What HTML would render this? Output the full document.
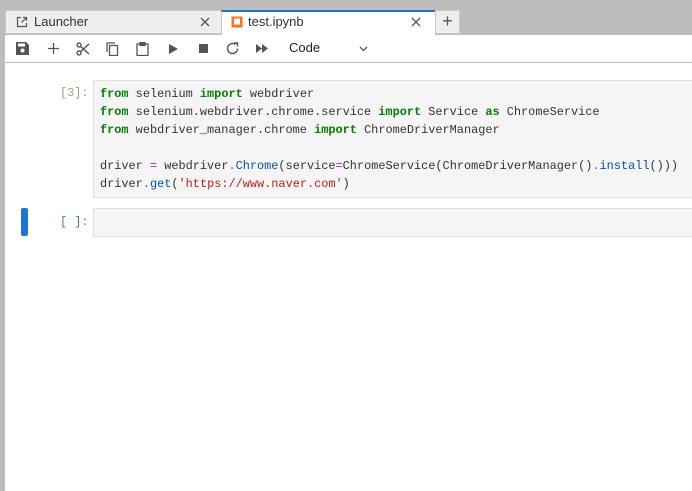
<!DOCTYPE html>
<html><head><style>
body{margin:0;width:692px;height:491px;background:#bdbdbd;overflow:hidden;font-family:"Liberation Sans",sans-serif;position:relative}
.main{position:absolute;left:5px;top:35px;width:687px;height:456px;background:#fff}
.tab{position:absolute;top:10px;height:24px;background:#eee;border:1px solid #c8c8c8;box-sizing:border-box;font-size:13px;color:#333;line-height:22px}
.tb{position:absolute;top:35px;left:5px;width:687px;height:27px;border-bottom:1px solid #c0c0c0;background:#fff}
.ic{position:absolute;top:7px}
.cell{position:absolute;left:93px;width:610px;background:#f5f5f5;border:1px solid #e0e0e0;box-sizing:border-box}
pre{margin:0;font-family:"Liberation Mono",monospace;font-size:11.9px;line-height:18px;color:#333;padding:4px 0 0 6px}
.k{color:#008000;font-weight:bold}.f{color:#0055aa}.s{color:#ba2121}.o{color:#aa22ff}
.pr{position:absolute;font-family:"Liberation Mono",monospace;font-size:11.9px}
.x{position:absolute;top:6px}
</style></head><body>
<div class="main"></div>
<div class="tab" style="left:5px;width:217px;padding-left:28px">Launcher
<svg style="position:absolute;left:10px;top:5px" width="12" height="12" viewBox="0 0 12 12" fill="none" stroke="#555" stroke-width="1.2"><path d="M5 1.5H1.5v9h9V7M7 1.5h3.5V5M10.5 1.5L5.5 6.5"/></svg>
<svg class="x" style="left:194px" width="10" height="10" viewBox="0 0 10 10" stroke="#555" stroke-width="1.3"><path d="M1 1l8 8M9 1L1 9"/></svg></div>
<div class="tab" style="left:221px;width:215px;background:#fff;border-top:2px solid #1976d2;border-bottom:none;padding-left:26px;line-height:20px;height:25px">test.ipynb
<svg style="position:absolute;left:9px;top:4px" width="12" height="12" viewBox="0 0 12 12"><rect x="0.5" y="0.5" width="11" height="11" fill="#f37726"/><rect x="3" y="2.5" width="6" height="6" fill="#fff"/></svg>
<svg class="x" style="left:189px;top:5px" width="10" height="10" viewBox="0 0 10 10" stroke="#555" stroke-width="1.3"><path d="M1 1l8 8M9 1L1 9"/></svg></div>
<div class="tab" style="left:435px;width:25px;text-align:center;font-size:18px;color:#555;line-height:21px">+</div>
<div class="tb">
<svg class="ic" style="left:11px" width="13" height="13" viewBox="0 0 13 13"><path d="M0 0h10l3 3v10H0z" fill="#555"/><rect x="2" y="1.5" width="7" height="3" fill="#fff"/><circle cx="6.5" cy="8.5" r="2" fill="#fff"/></svg>
<svg class="ic" style="left:42px" width="13" height="13" viewBox="0 0 13 13" stroke="#555" stroke-width="1.3"><path d="M6.5 1v11M1 6.5h11"/></svg>
<svg class="ic" style="left:71px" width="14" height="14" viewBox="0 0 14 14" fill="none" stroke="#555" stroke-width="1.4"><circle cx="3" cy="3" r="2"/><circle cx="3" cy="11" r="2"/><path d="M4.5 4.3L13 12M4.5 9.7L13 2"/></svg>
<svg class="ic" style="left:101px" width="13" height="14" viewBox="0 0 13 14" fill="none" stroke="#555" stroke-width="1.3"><path d="M1 10V1h8"/><rect x="3.5" y="3.5" width="8" height="10"/></svg>
<svg class="ic" style="left:131px" width="13" height="14" viewBox="0 0 13 14" fill="none" stroke="#555" stroke-width="1.3"><rect x="1" y="2" width="11" height="11.5"/><rect x="4" y="0.5" width="5" height="3" fill="#555"/></svg>
<svg class="ic" style="left:164px;top:9px" width="9" height="10" viewBox="0 0 9 10"><path d="M0 0l9 5-9 5z" fill="#555"/></svg>
<div style="position:absolute;left:194px;top:9px;width:9px;height:9px;background:#555"></div>
<svg class="ic" style="left:221px" width="13" height="13" viewBox="0 0 13 13" fill="none" stroke="#555" stroke-width="1.4"><path d="M11.5 6.5A5 5 0 1 1 9.5 2.5"/><path d="M8 1h3.5v3.5" /></svg>
<svg class="ic" style="left:251px;top:9px" width="12" height="9" viewBox="0 0 12 9" fill="#555"><path d="M0 0l6 4.5L0 9zM6 0l6 4.5L6 9z"/></svg>
<span style="position:absolute;left:284px;top:5px;font-size:13px;color:#222">Code</span>
<svg style="position:absolute;left:354px;top:11px" width="9" height="6" viewBox="0 0 9 6" fill="none" stroke="#555" stroke-width="1.3"><path d="M1 1l3.5 3.5L8 1"/></svg>
</div>
<div class="pr" style="left:60px;top:86px;color:#9e9e7e">[3]:</div>
<div class="cell" style="top:80px;height:118px"><pre><span class="k">from</span> selenium <span class="k">import</span> webdriver
<span class="k">from</span> selenium.webdriver.chrome.service <span class="k">import</span> Service <span class="k">as</span> ChromeService
<span class="k">from</span> webdriver_manager.chrome <span class="k">import</span> ChromeDriverManager

driver <span class="o">=</span> webdriver<span class="o">.</span><span class="f">Chrome</span>(service<span class="o">=</span>ChromeService(ChromeDriverManager()<span class="o">.</span><span class="f">install</span>()))
driver<span class="o">.</span><span class="f">get</span>(<span class="s">'https://www.naver.com'</span>)</pre></div>
<div style="position:absolute;left:21px;top:208px;width:7px;height:28px;background:#1976d2;border-radius:2px"></div>
<div class="pr" style="left:60px;top:215px;color:#307fc1">[ ]:</div>
<div class="cell" style="top:208px;height:29px"></div>
</body></html>
